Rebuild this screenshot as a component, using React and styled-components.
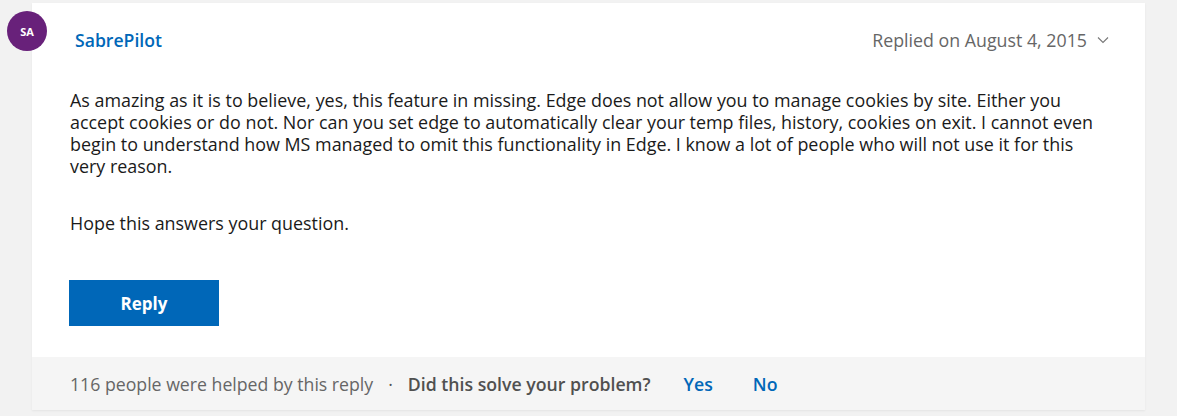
import React from 'react'
import styled, { createGlobalStyle } from 'styled-components'

const Global = createGlobalStyle`
  body {
    margin: 0;
    background: #f2f2f2;
    font-family: "Segoe UI", "Open Sans", "Noto Sans", sans-serif;
  }
`

const Page = styled.div`
  padding: 3px 32px 6px 32px;
  position: relative;
`

const Avatar = styled.div`
  position: absolute;
  left: 7px;
  top: 11px;
  width: 40px;
  height: 40px;
  border-radius: 50%;
  background: #68217a;
  color: #fff;
  font-size: 11px;
  font-weight: 700;
  display: flex;
  align-items: center;
  justify-content: center;
`

const Card = styled.div`
  background: #fff;
  box-shadow: 0 1px 2px rgba(0, 0, 0, 0.06);
`

const Header = styled.div`
  display: flex;
  justify-content: space-between;
  align-items: center;
  height: 24px;
  padding: 25px 36px 0 43px;
`

const Name = styled.a`
  color: #0067b8;
  font-size: 17.6px;
  font-weight: 600;
  text-decoration: none;
`

const Date = styled.div`
  display: flex;
  align-items: center;
  gap: 10px;
  color: #666;
  font-size: 17.8px;
`

const Body = styled.div`
  padding: 37px 36px 0 38px;
  color: #1a1a1a;
  font-size: 17.9px;
  line-height: 22px;

  p {
    margin: 0 0 35px 0;
  }
  p:last-child {
    margin-bottom: 0;
  }
`

const ReplyButton = styled.button`
  display: block;
  margin: 46px 0 31px 37px;
  width: 150px;
  height: 46px;
  border: none;
  background: #0067b8;
  color: #fff;
  font-family: inherit;
  font-size: 17px;
  font-weight: 700;
`

const Footer = styled.div`
  background: #f5f5f5;
  height: 53px;
  display: flex;
  align-items: center;
  padding-left: 38px;
  font-size: 17.7px;
`

const Helped = styled.span`
  color: #666;
`

const Dot = styled.span`
  color: #555;
  margin: 0 15px 0 15px;
`

const Question = styled.span`
  color: #505050;
  font-weight: 600;
  margin-right: 33px;
`

const Vote = styled.a`
  color: #0067b8;
  font-weight: 600;
  margin-right: 40px;
`

const Chevron = () => (
  <svg width="12" height="8" viewBox="0 0 12 8">
    <path d="M1 1.5 L6 6.5 L11 1.5" fill="none" stroke="#777" strokeWidth="1.1" />
  </svg>
)

export default function App() {
  return (
    <>
      <Global />
      <Page>
        <Avatar>SA</Avatar>
        <Card>
          <Header>
            <Name>SabrePilot</Name>
            <Date>
              Replied on August 4, 2015 <Chevron />
            </Date>
          </Header>
          <Body>
            <p>
              As amazing as it is to believe, yes, this feature in missing. Edge does not allow you to manage cookies by site. Either you accept cookies or do not. Nor can you set edge to automatically clear your temp files, history, cookies on exit. I cannot even begin to understand how MS managed to omit this functionality in Edge. I know a lot of people who will not use it for this very reason.
            </p>
            <p>Hope this answers your question.</p>
          </Body>
          <ReplyButton>Reply</ReplyButton>
          <Footer>
            <Helped>116 people were helped by this reply</Helped>
            <Dot>·</Dot>
            <Question>Did this solve your problem?</Question>
            <Vote>Yes</Vote>
            <Vote>No</Vote>
          </Footer>
        </Card>
      </Page>
    </>
  )
}
